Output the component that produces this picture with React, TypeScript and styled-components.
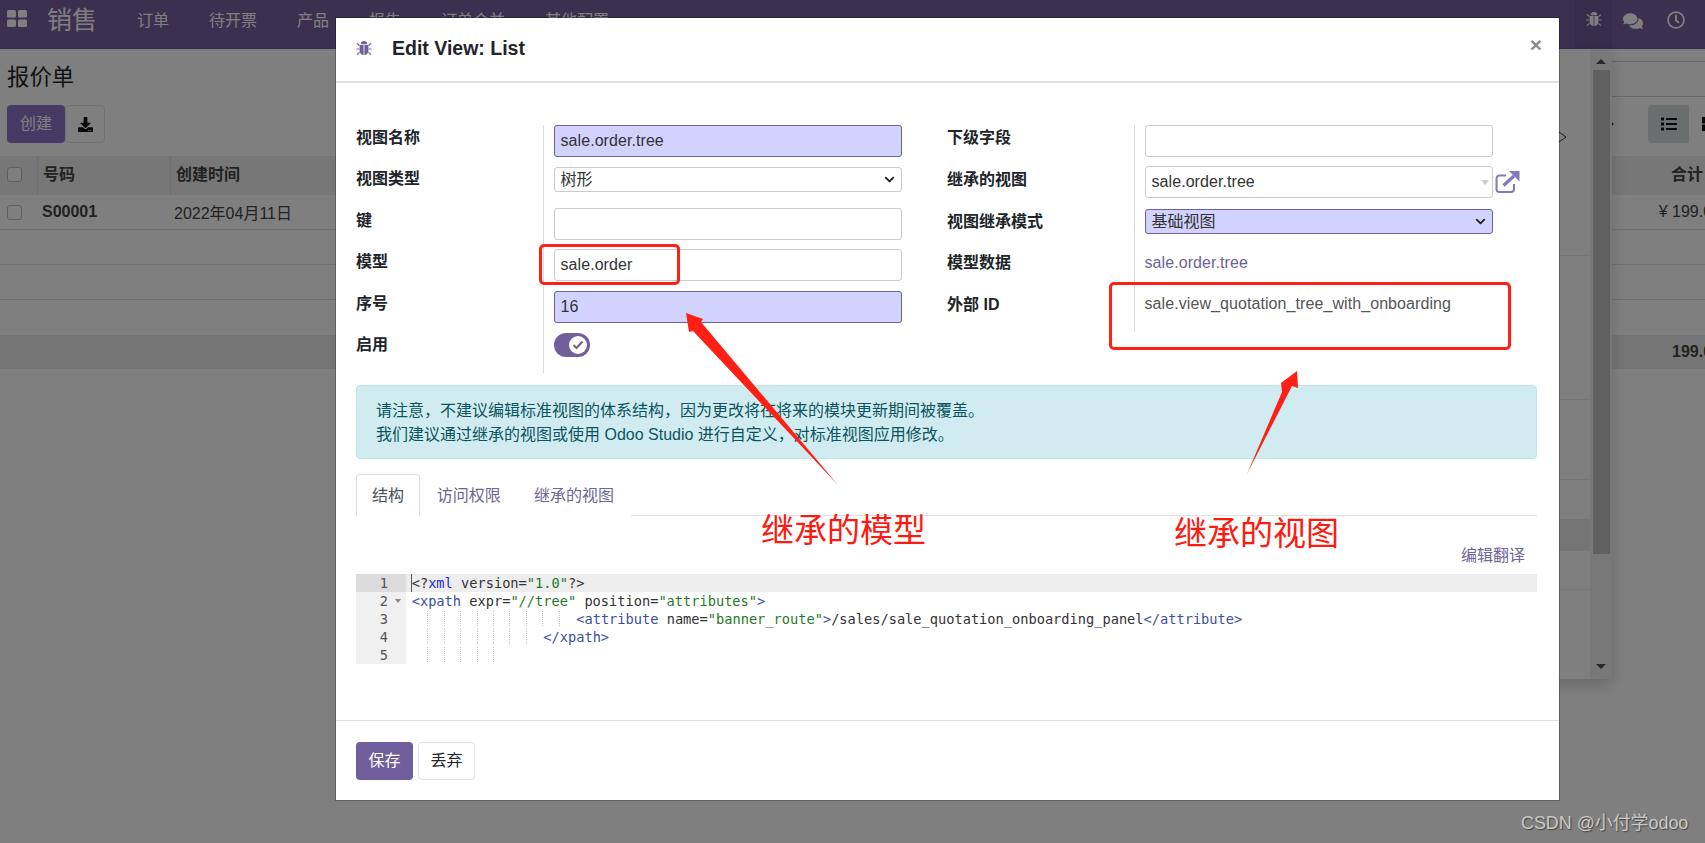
import React from "react";
import styled, { createGlobalStyle } from "styled-components";
import { FaComments, FaDownload, FaList, FaRegClock, FaThLarge } from "react-icons/fa";
import { LuChevronDown } from "react-icons/lu";

const purple = "#705f9c";
const FONT = `"Liberation Sans", "Noto Sans CJK SC", sans-serif`;

const Global = createGlobalStyle`
  * { box-sizing: border-box; }
  html, body { margin: 0; padding: 0; background: #fff; }
  body { font-family: ${FONT}; font-size: 16px; color: #212529; }
`;

const Page = styled.div`
  position: relative;
  width: 1705px;
  height: 843px;
  overflow: hidden;
  background: #fff;
`;

/* ---------- app behind the dialog ---------- */
const TopBar = styled.header`
  display: flex;
  align-items: flex-start;
  height: 49px;
  background: #76609f;
  border-bottom: 1px solid #6a5a92;
  color: #fff;
`;
const AppsButton = styled.span`
  display: flex;
  width: 47px;
  padding: 10px 0 0 7px;
`;
const Brand = styled.span`
  font-size: 25px;
  line-height: 40px;
  width: 70px;
  padding-right: 20px;
  flex: none;
  white-space: nowrap;
`;
const NavItem = styled.span`
  padding: 0 20px;
  line-height: 42px;
  white-space: nowrap;
`;
const Systray = styled.div`
  margin-left: auto;
  display: flex;
  padding-right: 6px;
`;
const TrayItem = styled.span<{ $active?: boolean; $w: number }>`
  width: ${(p) => p.$w}px;
  height: 48px;
  display: flex;
  justify-content: center;
  padding-top: 11px;
  background: ${(p) => (p.$active ? "#6a5a92" : "transparent")};
`;
const ControlPanel = styled.section`
  display: flex;
  justify-content: space-between;
  padding: 12px 0 13px 7px;
  height: 107px;
`;
const ControlColumn = styled.div`
  display: flex;
  flex-direction: column;
  gap: 8px;
`;
const ControlColumnRight = styled(ControlColumn)`
  align-items: flex-end;
  margin-right: -25px;
`;
const PageTitle = styled.h1`
  margin: 0;
  height: 36px;
  font-size: 22.4px;
  line-height: 33px;
  font-weight: 400;
`;
const ButtonRow = styled.div`
  display: flex;
  align-items: center;
  height: 38px;
`;
const CreateButton = styled.span`
  width: 58px;
  height: 38px;
  line-height: 38px;
  text-align: center;
  color: #fff;
  background: #8a74c8;
  border-radius: 4px;
`;
const IconButton = styled.span`
  width: 40px;
  height: 38px;
  display: flex;
  align-items: center;
  justify-content: center;
  border: 1px solid #dee2e6;
  border-radius: 4px;
  color: #111;
`;
const SearchBox = styled.div`
  width: 700px;
  height: 36px;
  border: 1px solid #cfcfcf;
`;
const PagerCaret = styled.span`
  width: 0;
  height: 0;
  margin-right: 34px;
  border-left: 5px solid #222;
  border-top: 4px solid transparent;
  border-bottom: 4px solid transparent;
`;
const ViewButton = styled.span<{ $active?: boolean }>`
  width: 41px;
  height: 38px;
  display: flex;
  align-items: center;
  justify-content: center;
  background: ${(p) => (p.$active ? "#d6dcdf" : "#fff")};
  border-radius: ${(p) => (p.$active ? "4px 0 0 4px" : "0")};
  color: #111;
`;
const ListTable = styled.div`
  width: 1729px;
`;
const TableRow = styled.div<{ $h: number; $bg?: string; $line?: boolean }>`
  display: grid;
  grid-template-columns: 37px 133px 1fr 120px;
  height: ${(p) => p.$h}px;
  align-items: center;
  background: ${(p) => p.$bg ?? "#fff"};
  border-bottom: ${(p) => (p.$line === false ? "0" : "1px solid #e2e2e2")};
`;
const CheckCell = styled.span`
  padding-left: 7px;
  height: 100%;
  display: flex;
  align-items: center;
`;
const HeadCheckCell = styled(CheckCell)`
  padding-bottom: 3px;
`;
const Check = styled.span`
  width: 15px;
  height: 15px;
  border: 1px solid #bdbdbd;
  border-radius: 3px;
  background: #fff;
`;
const HeadCell = styled.span<{ $sep?: boolean; $right?: boolean }>`
  font-weight: 700;
  color: #444;
  height: 100%;
  display: flex;
  align-items: center;
  padding: 0 26px 5px 5px;
  justify-content: ${(p) => (p.$right ? "flex-end" : "flex-start")};
  border-left: ${(p) => (p.$sep ? "1px solid #dcdcdc" : "0")};
`;
const BodyCell = styled.span<{ $bold?: boolean; $right?: boolean; $pad?: number }>`
  font-weight: ${(p) => (p.$bold ? 700 : 400)};
  color: #444;
  padding: 0 8px 0 ${(p) => p.$pad ?? 5}px;
  text-align: ${(p) => (p.$right ? "right" : "left")};
  white-space: nowrap;
`;

/* ---------- dropdown panel between app and backdrop ---------- */
const DropPanel = styled.div`
  position: absolute;
  left: 1100px;
  top: 49px;
  width: 512px;
  height: 630px;
  display: flex;
  background: #fff;
  box-shadow: 0 6px 14px rgba(0, 0, 0, 0.18);
`;
const DropList = styled.div`
  flex: 1;
  display: flex;
  flex-direction: column;
`;
const DropRow = styled.div<{ $h: number; $band?: boolean; $line?: boolean }>`
  height: ${(p) => p.$h}px;
  flex: none;
  background: ${(p) => (p.$band ? "#ebebeb" : "#fff")};
  border-bottom: ${(p) => (p.$line ? "1px solid #ececec" : "0")};
`;
const ScrollTrack = styled.div`
  width: 22px;
  flex: none;
  display: flex;
  flex-direction: column;
  align-items: center;
  padding: 10px 0;
  background: #f1f1f1;
`;
const ScrollUp = styled.span`
  border-left: 5px solid transparent;
  border-right: 5px solid transparent;
  border-bottom: 5px solid #505050;
`;
const ScrollDown = styled.span`
  margin-top: auto;
  border-left: 5px solid transparent;
  border-right: 5px solid transparent;
  border-top: 5px solid #505050;
`;
const ScrollThumb = styled.div`
  width: 17px;
  height: 484px;
  margin-top: 6px;
  background: #c1c1c1;
`;
const StrayGlyph = styled.svg`
  position: absolute;
  left: 1558px;
  top: 131px;
`;
const Backdrop = styled.div`
  position: absolute;
  inset: 0;
  background: rgba(0, 0, 0, 0.5);
`;

/* ---------- dialog ---------- */
const Dialog = styled.div`
  position: absolute;
  left: 335px;
  top: 17px;
  width: 1225px;
  height: 784px;
  display: flex;
  flex-direction: column;
  background: #fff;
  background-clip: padding-box;
  border: 1px solid rgba(0, 0, 0, 0.25);
`;
const DialogHeader = styled.div`
  height: 65px;
  flex: none;
  display: flex;
  align-items: center;
  gap: 20px;
  padding: 0 16px 3px 20px;
  border-bottom: 2px solid #dee2e6;
`;
const DialogTitle = styled.h4`
  margin: 0;
  font-size: 19.5px;
  font-weight: 700;
  color: #212529;
  flex: 1;
`;
const CloseMark = styled.span`
  font-size: 21px;
  font-weight: 700;
  line-height: 21px;
  margin: 0 1px 7px 0;
  color: #8a8a8a;
`;
const DialogBody = styled.div`
  flex: 1;
  padding: 42px 22px 0 20px;
`;
const FormGrid = styled.div`
  display: grid;
  grid-template-columns: 591px 1fr;
`;
const FieldLabel = styled.label<{ $dy?: number }>`
  font-weight: 700;
  line-height: 24px;
  padding-top: ${(p) => p.$dy ?? 1}px;
  color: #212529;
`;
const FieldGroup = styled.div`
  display: grid;
  grid-template-columns: 186.5px 1fr;
  grid-auto-rows: 41.4px;
  align-content: start;
`;
const FieldCell = styled.div`
  border-left: 1px solid #dcdcdc;
  padding-left: 10px;
  display: flex;
  align-items: flex-start;
  gap: 2px;
`;
const TextBox = styled.div<{ $required?: boolean }>`
  position: relative;
  width: 348px;
  height: 32px;
  line-height: 30px;
  padding: 0 6px;
  letter-spacing: 0.07px;
  border-radius: 3px;
  border: 1px solid ${(p) => (p.$required ? purple : "#ccc")};
  background: ${(p) => (p.$required ? "#d2d2ff" : "#fff")};
  color: #333;
`;
const SelectBox = styled.div<{ $required?: boolean }>`
  width: 348px;
  height: 25px;
  margin-top: 1px;
  display: flex;
  align-items: center;
  justify-content: space-between;
  padding: 0 4px 0 6px;
  line-height: 23px;
  border-radius: 3px;
  border: 1px solid ${(p) => (p.$required ? purple : "#ccc")};
  background: ${(p) => (p.$required ? "#d2d2ff" : "#fff")};
  color: #333;
`;
const AutoCaret = styled.span`
  position: absolute;
  right: 3px;
  top: 13px;
  border-left: 4.5px solid transparent;
  border-right: 4.5px solid transparent;
  border-top: 5px solid #ccc;
`;
const StaticValue = styled.span<{ $link?: boolean }>`
  line-height: 24px;
  letter-spacing: 0.08px;
  margin-top: ${(p) => (p.$link ? 2 : 1)}px;
  color: ${(p) => (p.$link ? "#6b6494" : "#555")};
`;
const ExternalLink = styled.svg`
  margin-top: 5px;
  flex: none;
`;
const Toggle = styled.span`
  width: 36px;
  height: 24px;
  margin-top: 1px;
  display: flex;
  align-items: center;
  justify-content: flex-end;
  padding-right: 3px;
  background: ${purple};
  border-radius: 12px;
`;
const ToggleKnob = styled.span`
  width: 18px;
  height: 18px;
  border-radius: 50%;
  background: #fff;
  display: flex;
  align-items: center;
  justify-content: center;
`;
const Notice = styled.div`
  margin-top: 12px;
  padding: 13px 19px 11px;
  height: 74px;
  line-height: 24px;
  color: #0c5460;
  background: #d1ecf1;
  border: 1px solid #bee5eb;
  border-radius: 4px;
  white-space: nowrap;
`;
const TabBar = styled.div`
  margin-top: 15px;
  display: flex;
  height: 42px;
  border-bottom: 1px solid #dee2e6;
`;
const Tab = styled.span<{ $active?: boolean }>`
  height: 42px;
  line-height: 42px;
  padding: 0 ${(p) => (p.$active ? 15 : 15.7)}px;
  color: ${(p) => (p.$active ? "#495057" : "#6f6595")};
  background: #fff;
  border: 1px solid ${(p) => (p.$active ? "#dee2e6" : "transparent")};
  border-bottom-color: ${(p) => (p.$active ? "#fff" : "transparent")};
  border-radius: 4px 4px 0 0;
`;
const TranslateRow = styled.div`
  height: 58px;
  display: flex;
  align-items: flex-end;
  justify-content: flex-end;
  padding: 0 12px 6px 0;
  line-height: 24px;
  color: #6f6595;
`;
const Editor = styled.div`
  height: 90px;
  overflow: hidden;
  font-family: "DejaVu Sans Mono", "Liberation Mono", monospace;
  font-size: 13.66px;
  line-height: 18px;
`;
const EditorLine = styled.div<{ $active?: boolean }>`
  position: relative;
  display: flex;
  height: 18px;
  background: ${(p) => (p.$active ? "#ededed" : "#fff")};
`;
const Gutter = styled.span<{ $active?: boolean }>`
  position: relative;
  flex: none;
  width: 50px;
  padding-right: 18px;
  text-align: right;
  color: #555;
  background: ${(p) => (p.$active ? "#dcdcdc" : "#f0f0f0")};
`;
const FoldMark = styled.span`
  position: absolute;
  right: 5px;
  top: 7px;
  border-left: 3.5px solid transparent;
  border-right: 3.5px solid transparent;
  border-top: 4px solid #888;
`;
const Code = styled.code`
  font: inherit;
  padding-left: 5.7px;
  white-space: pre;
  color: #333;
`;
const Cursor = styled.span`
  position: absolute;
  left: 55px;
  top: 0;
  width: 1px;
  height: 18px;
  background: #555;
`;
const Guide = styled.span`
  background: repeating-linear-gradient(to bottom, #c4c4c4 0 1px, transparent 1px 2px) right top / 1px 100% no-repeat;
`;
const Tag = styled.span`
  color: #3b4f9f;
`;
const XmlDecl = styled.span`
  color: #2a2ad8;
`;
const Str = styled.span`
  color: #1f7a1f;
`;
const DialogFooter = styled.div`
  flex: none;
  height: 80px;
  display: flex;
  align-items: flex-start;
  gap: 5px;
  padding: 21px 20px 0;
  border-top: 1px solid #dee2e6;
`;
const SaveButton = styled.span`
  width: 57px;
  height: 38px;
  line-height: 38px;
  text-align: center;
  color: #fff;
  background: ${purple};
  border-radius: 4px;
`;
const DiscardButton = styled.span`
  width: 57px;
  height: 38px;
  line-height: 36px;
  text-align: center;
  color: #212529;
  background: #fff;
  border: 1px solid #dee2e6;
  border-radius: 4px;
`;

/* ---------- screenshot annotations ---------- */
const RedBox = styled.div<{ $x: number; $y: number; $w: number; $h: number }>`
  position: absolute;
  left: ${(p) => p.$x}px;
  top: ${(p) => p.$y}px;
  width: ${(p) => p.$w}px;
  height: ${(p) => p.$h}px;
  border: 3px solid #ff2015;
  border-radius: 5px;
`;
const RedNote = styled.div<{ $x: number; $y: number }>`
  position: absolute;
  left: ${(p) => p.$x}px;
  top: ${(p) => p.$y}px;
  font-size: 33px;
  line-height: 36px;
  color: #ff1a10;
  white-space: nowrap;
`;
const ArrowLayer = styled.svg`
  position: absolute;
  inset: 0;
  pointer-events: none;
`;
const Watermark = styled.div`
  position: absolute;
  left: 1521px;
  top: 812px;
  font-size: 17.9px;
  line-height: 22px;
  color: #c9c9c9;
  text-shadow: 1px 1px 1px #444;
  white-space: nowrap;
`;

const BugIcon = ({ size, color }: { size: number; color: string }) => (
  <svg width={size} height={size} viewBox="0 0 16 16" fill={color} stroke="none">
    <path d="M4.8 4.2a3.2 3.2 0 0 1 6.4 0z" />
    <path d="M3.6 5h4v10C5.2 15 3.6 12.8 3.6 10.4z" />
    <path d="M8.4 5h4v5.4c0 2.4-1.6 4.6-4 4.6z" />
    <path d="M3.4 5.4 1 3.6M12.6 5.4 15 3.6M3.2 9H.4M12.8 9h2.8M3.6 12.4 1 14.6M12.4 12.4l2.6 2.2" stroke={color} strokeWidth="1.2" fill="none" />
  </svg>
);

const AppsIcon = () => (
  <svg width="20" height="17" viewBox="0 0 20 17" fill="#fff">
    <rect x="0" y="0" width="9" height="7.5" rx="1.6" />
    <rect x="11" y="0" width="9" height="7.5" rx="1.6" />
    <rect x="0" y="9.5" width="9" height="7.5" rx="1.6" />
    <rect x="11" y="9.5" width="9" height="7.5" rx="1.6" />
  </svg>
);

const ExternalIcon = () => (
  <ExternalLink width="25" height="23" viewBox="0 0 25 23">
    <path d="M11 4.5H4.5a3 3 0 0 0-3 3V18a3 3 0 0 0 3 3H16a3 3 0 0 0 3-3v-5" fill="none" stroke="#8379b8" strokeWidth="2" />
    <path d="M8.5 14.5 19 5" fill="none" stroke="#8379b8" strokeWidth="3.2" />
    <path d="M14 0h10.5v10.5z" fill="#8379b8" />
  </ExternalLink>
);

const indent = (n: number) =>
  Array.from({ length: n }, (_, i) => <Guide key={i}>{"  "}</Guide>);

export default function App() {
  return (
    <Page>
      <Global />
      <TopBar>
        <AppsButton>
          <AppsIcon />
        </AppsButton>
        <Brand>销售</Brand>
        <NavItem>订单</NavItem>
        <NavItem>待开票</NavItem>
        <NavItem>产品</NavItem>
        <NavItem>报告</NavItem>
        <NavItem>订单合并</NavItem>
        <NavItem>其他配置</NavItem>
        <Systray>
          <TrayItem $active $w={37}>
            <BugIcon size={16} color="#fff" />
          </TrayItem>
          <TrayItem $w={41}>
            <FaComments size={20} />
          </TrayItem>
          <TrayItem $w={46}>
            <FaRegClock size={18} />
          </TrayItem>
        </Systray>
      </TopBar>
      <ControlPanel>
        <ControlColumn>
          <PageTitle>报价单</PageTitle>
          <ButtonRow>
            <CreateButton>创建</CreateButton>
            <IconButton>
              <FaDownload size={15} />
            </IconButton>
          </ButtonRow>
        </ControlColumn>
        <ControlColumnRight>
          <SearchBox />
          <ButtonRow>
            <PagerCaret />
            <ViewButton $active>
              <FaList size={16} />
            </ViewButton>
            <ViewButton>
              <FaThLarge size={16} />
            </ViewButton>
          </ButtonRow>
        </ControlColumnRight>
      </ControlPanel>
      <ListTable>
        <TableRow $h={39} $bg="#eeeeee" $line={false}>
          <HeadCheckCell>
            <Check />
          </HeadCheckCell>
          <HeadCell $sep>号码</HeadCell>
          <HeadCell $sep>创建时间</HeadCell>
          <HeadCell $right>合计</HeadCell>
        </TableRow>
        <TableRow $h={35}>
          <CheckCell>
            <Check />
          </CheckCell>
          <BodyCell $bold>S00001</BodyCell>
          <BodyCell $pad={4}>2022年04月11日</BodyCell>
          <BodyCell $right>¥ 199.00</BodyCell>
        </TableRow>
        <TableRow $h={35} />
        <TableRow $h={35} />
        <TableRow $h={35} $line={false} />
        <TableRow $h={34} $bg="#ebebeb" $line={false}>
          <span />
          <span />
          <span />
          <BodyCell $bold $right>
            199.00
          </BodyCell>
        </TableRow>
      </ListTable>

      <DropPanel>
        <DropList>
          <DropRow $h={207} $line />
          <DropRow $h={144} $line />
          <DropRow $h={80} $line />
          <DropRow $h={39} />
          <DropRow $h={32} $band />
          <DropRow $h={39} $line />
          <DropRow $h={89} />
        </DropList>
        <ScrollTrack>
          <ScrollUp />
          <ScrollThumb />
          <ScrollDown />
        </ScrollTrack>
      </DropPanel>
      <StrayGlyph width="9" height="12" viewBox="0 0 9 12">
        <path d="M1 1l7 5-7 5" fill="none" stroke="#333" strokeWidth="1" />
      </StrayGlyph>

      <Backdrop />

      <Dialog>
        <DialogHeader>
          <BugIcon size={16} color={purple} />
          <DialogTitle>Edit View: List</DialogTitle>
          <CloseMark>×</CloseMark>
        </DialogHeader>
        <DialogBody>
          <FormGrid>
            <FieldGroup>
              <FieldLabel>视图名称</FieldLabel>
              <FieldCell>
                <TextBox $required>sale.order.tree</TextBox>
              </FieldCell>
              <FieldLabel>视图类型</FieldLabel>
              <FieldCell>
                <SelectBox>
                  树形
                  <LuChevronDown size={15} strokeWidth={3} color="#222" />
                </SelectBox>
              </FieldCell>
              <FieldLabel>键</FieldLabel>
              <FieldCell>
                <TextBox />
              </FieldCell>
              <FieldLabel>模型</FieldLabel>
              <FieldCell>
                <TextBox>sale.order</TextBox>
              </FieldCell>
              <FieldLabel>序号</FieldLabel>
              <FieldCell>
                <TextBox $required>16</TextBox>
              </FieldCell>
              <FieldLabel>启用</FieldLabel>
              <FieldCell>
                <Toggle>
                  <ToggleKnob>
                    <svg width="12" height="10" viewBox="0 0 12 10">
                      <path d="M1.5 5l3 3 6-6.5" fill="none" stroke={purple} strokeWidth="2" />
                    </svg>
                  </ToggleKnob>
                </Toggle>
              </FieldCell>
            </FieldGroup>
            <FieldGroup>
              <FieldLabel>下级字段</FieldLabel>
              <FieldCell>
                <TextBox />
              </FieldCell>
              <FieldLabel $dy={2}>继承的视图</FieldLabel>
              <FieldCell>
                <TextBox>
                  sale.order.tree
                  <AutoCaret />
                </TextBox>
                <ExternalIcon />
              </FieldCell>
              <FieldLabel $dy={2}>视图继承模式</FieldLabel>
              <FieldCell>
                <SelectBox $required>
                  基础视图
                  <LuChevronDown size={15} strokeWidth={3} color="#222" />
                </SelectBox>
              </FieldCell>
              <FieldLabel $dy={2}>模型数据</FieldLabel>
              <FieldCell>
                <StaticValue $link>sale.order.tree</StaticValue>
              </FieldCell>
              <FieldLabel $dy={2}>外部 ID</FieldLabel>
              <FieldCell>
                <StaticValue>sale.view_quotation_tree_with_onboarding</StaticValue>
              </FieldCell>
            </FieldGroup>
          </FormGrid>
          <Notice>
            请注意，不建议编辑标准视图的体系结构，因为更改将在将来的模块更新期间被覆盖。
            <br />
            我们建议通过继承的视图或使用 Odoo Studio 进行自定义，对标准视图应用修改。
          </Notice>
          <TabBar>
            <Tab $active>结构</Tab>
            <Tab>访问权限</Tab>
            <Tab>继承的视图</Tab>
          </TabBar>
          <TranslateRow>编辑翻译</TranslateRow>
          <Editor>
            <EditorLine $active>
              <Gutter $active>1</Gutter>
              <Code>
                {"<?"}
                <XmlDecl>xml</XmlDecl> version=<Str>"1.0"</Str>
                {"?>"}
              </Code>
              <Cursor />
            </EditorLine>
            <EditorLine>
              <Gutter>
                2
                <FoldMark />
              </Gutter>
              <Code>
                <Tag>{"<xpath"}</Tag> expr=<Str>"//tree"</Str> position=<Str>"attributes"</Str>
                <Tag>{">"}</Tag>
              </Code>
            </EditorLine>
            <EditorLine>
              <Gutter>3</Gutter>
              <Code>
                {indent(9)}
                {"  "}
                <Tag>{"<attribute"}</Tag> name=<Str>"banner_route"</Str>
                <Tag>{">"}</Tag>/sales/sale_quotation_onboarding_panel<Tag>{"</attribute>"}</Tag>
              </Code>
            </EditorLine>
            <EditorLine>
              <Gutter>4</Gutter>
              <Code>
                {indent(7)}
                {"  "}
                <Tag>{"</xpath>"}</Tag>
              </Code>
            </EditorLine>
            <EditorLine>
              <Gutter>5</Gutter>
              <Code>{indent(5)}</Code>
            </EditorLine>
          </Editor>
        </DialogBody>
        <DialogFooter>
          <SaveButton>保存</SaveButton>
          <DiscardButton>丢弃</DiscardButton>
        </DialogFooter>
      </Dialog>

      <RedBox $x={539} $y={244} $w={141} $h={41} />
      <RedBox $x={1109} $y={282} $w={402} $h={68} />
      <ArrowLayer width="1705" height="843" viewBox="0 0 1705 843">
        <path d="M686 313 L703 319 L701 322 L838 485 L693 331 L689 332 Z" fill="#ff2015" />
        <path d="M1297 371 L1298 388 L1292 386 L1247 474 L1282 392 L1281 383 Z" fill="#ff2015" />
      </ArrowLayer>
      <RedNote $x={761} $y={513}>继承的模型</RedNote>
      <RedNote $x={1174} $y={516}>继承的视图</RedNote>
      <Watermark>CSDN @小付学odoo</Watermark>
    </Page>
  );
}
